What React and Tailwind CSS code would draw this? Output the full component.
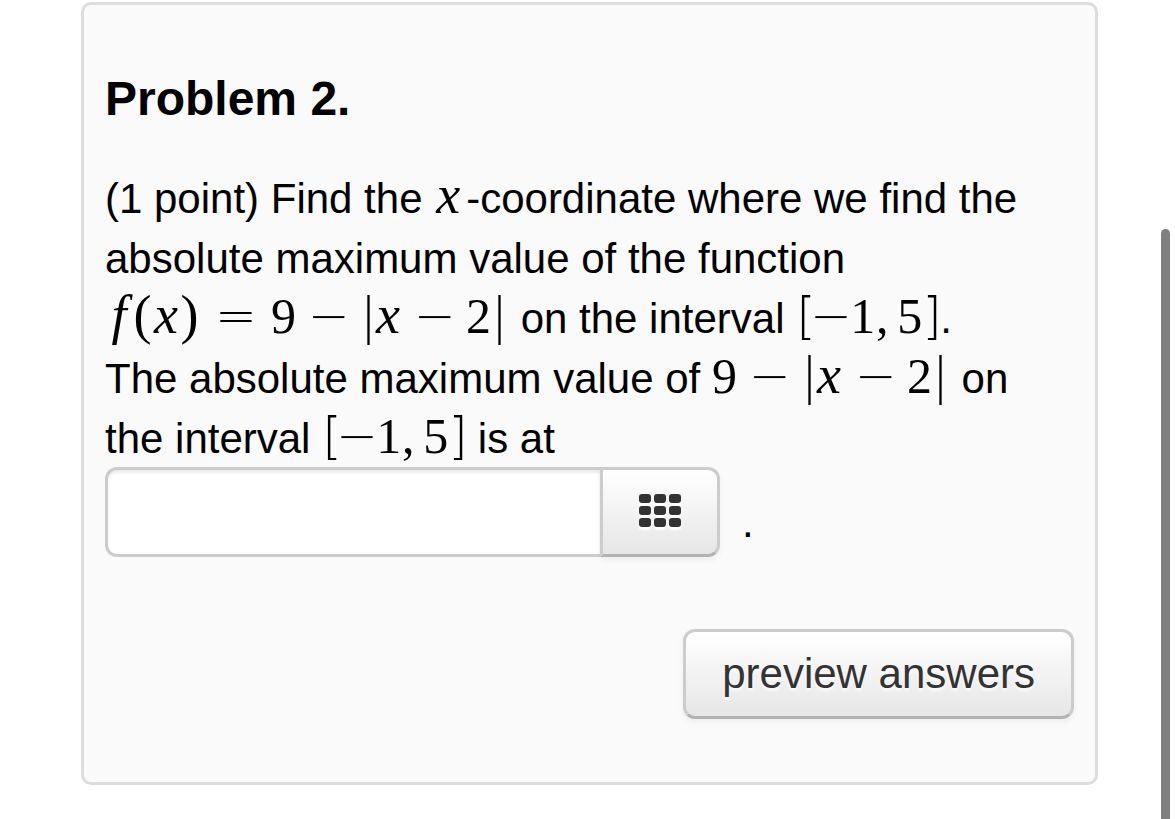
import { useState } from 'react'

// One character of a formula, centred in a cell of fixed advance
function Glyph({ className, children }) {
  return <span className={`inline-block text-center leading-10 ${className}`}>{children}</span>
}

const Digit = ({ children }) => <Glyph className="w-[25px] text-[50px]">{children}</Glyph>
const Variable = ({ children }) => <Glyph className="w-7 text-[54px] italic">{children}</Glyph>
const Paren = ({ children }) => <Glyph className="w-[19px] text-[54px]">{children}</Glyph>
const Comma = () => <Glyph className="mr-2 w-3.5 text-[50px]">,</Glyph>
const Fence = ({ children }) => (
  <Glyph className="w-3.5 font-['DejaVu_Sans',sans-serif] text-[50px] font-extralight">{children}</Glyph>
)
const Sign = ({ children }) => (
  <Glyph className="w-10 font-['DejaVu_Sans',sans-serif] text-[50px] font-extralight">{children}</Glyph>
)

function Formula({ children }) {
  return (
    <span className="mr-1 whitespace-nowrap font-['Liberation_Serif',serif] leading-[0]">{children}</span>
  )
}

function Expression() {
  return (
    <>
      <Digit>9</Digit>
      <span className="mx-3"><Sign>−</Sign></span>
      <Fence>|</Fence>
      <Variable>x</Variable>
      <span className="mx-3"><Sign>−</Sign></span>
      <Digit>2</Digit>
      <Fence>|</Fence>
    </>
  )
}

function Interval() {
  return (
    <Formula>
      <Fence>[</Fence>
      <Sign>−</Sign>
      <Digit>1</Digit>
      <Comma />
      <Digit>5</Digit>
      <Fence>]</Fence>
    </Formula>
  )
}

function KeypadIcon() {
  const cells = [0, 1, 2]
  return (
    <svg width="42" height="33" viewBox="0 0 42 33" fill="#333" aria-hidden="true" className="drop-shadow-[0_3px_1px_#fff]">
      {cells.map((row) =>
        cells.map((col) => (
          <rect key={`${row}-${col}`} x={col * 15} y={row * 12} width="12" height="9" rx="3" />
        ))
      )}
    </svg>
  )
}

export default function App() {
  const [answer, setAnswer] = useState('')

  return (
    <div className="relative min-h-screen bg-white pt-0.5 pr-[77px] pb-8 pl-[81px] font-['Liberation_Sans',Arial,sans-serif] text-black">
      <main className="rounded-[10px] border-3 border-[#ddd] bg-[#fafafa] px-[21px] pt-16 pb-[63px]">
        <h1 className="text-5xl leading-[60px] font-bold">Problem 2.</h1>

        <form className="mt-10" onSubmit={(e) => e.preventDefault()}>
          <p className="-mb-0.5 text-[42px] leading-[60px]">
            (1 point) Find the <Formula><Variable>x</Variable></Formula>-coordinate where we find the
            absolute maximum value of the function{' '}
            <Formula>
              <Variable>f</Variable>
              <Paren>(</Paren>
              <Variable>x</Variable>
              <Paren>)</Paren>
              <span className="mx-4"><Sign>=</Sign></span>
              <Expression />
            </Formula>{' '}
            on the interval <Interval />.
            <br />
            The absolute maximum value of <Formula><Expression /></Formula> on the interval{' '}
            <Interval /> is at
          </p>

          <div className="flex items-center gap-[22px] text-[42px]">
            <div className="flex">
              <input
                type="text"
                aria-label="Answer"
                value={answer}
                onChange={(e) => setAnswer(e.target.value)}
                className="h-[90px] w-[495px] rounded-l-xl border-3 border-r-0 border-[#ccc] bg-white px-4 shadow-[inset_0_3px_3px_rgba(0,0,0,0.075)] outline-none"
              />
              <button
                type="button"
                aria-label="Open equation editor"
                className="flex h-[90px] w-[120px] items-center justify-center rounded-r-xl border-3 border-[#ccc] border-b-[#b3b3b3] bg-linear-to-b from-white to-[#e6e6e6] pb-1 shadow-[0_3px_6px_rgba(0,0,0,0.05)]"
              >
                <KeypadIcon />
              </button>
            </div>
            <span className="pt-5">.</span>
          </div>

          <div className="mt-[72px] flex justify-end">
            <button
              type="submit"
              className="h-[90px] rounded-xl border-3 border-[#ccc] border-b-[#b3b3b3] bg-linear-to-b from-white to-[#e6e6e6] px-9 text-[42px] leading-[60px] text-[#333] shadow-[0_3px_6px_rgba(0,0,0,0.05)] text-shadow-[0_3px_3px_rgba(255,255,255,0.75)]"
            >
              preview answers
            </button>
          </div>
        </form>
      </main>

      {/* Overlay scrollbar thumb */}
      <div className="absolute top-[229px] right-[5px] bottom-0 w-[9px] rounded-t-full bg-[#808080]" />
    </div>
  )
}
